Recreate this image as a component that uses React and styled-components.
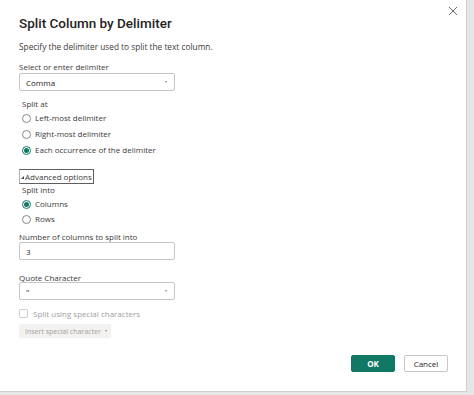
import React from "react";
import styled, { createGlobalStyle } from "styled-components";

const Global = createGlobalStyle`
  html, body { margin: 0; padding: 0; background: #e4e4e4; }
  body { font-family: "Open Sans", "Noto Sans", sans-serif; color: #252423; }
  * { box-sizing: border-box; }
`;

const Page = styled.div`
  width: 474px;
  height: 395px;
  display: flex;
  background: #e6e6e6;
  overflow: hidden;
`;

const Dialog = styled.div`
  width: 467px;
  height: 392px;
  background: #fff;
  border-right: 1px solid #d0d0d0;
  border-bottom: 1px solid #d0d0d0;
  position: relative;
  padding: 13px 0 0 19px;
  display: flex;
  flex-direction: column;
`;

const Close = styled.button`
  position: absolute;
  top: 4px;
  right: 6px;
  width: 14px;
  height: 14px;
  border: 0;
  background: transparent;
  padding: 0;
  display: flex;
  align-items: center;
  justify-content: center;
`;

const Title = styled.h1`
  margin: 0;
  font-family: Roboto, "Open Sans", sans-serif;
  font-size: 13.5px;
  font-weight: 500;
  line-height: 20px;
  color: #252423;
`;

const Desc = styled.p`
  margin: 8px 0 0;
  font-size: 8.3px;
  line-height: 12px;
  color: #3b3a39;
`;

const Label = styled.div`
  font-size: 8px;
  line-height: 12px;
  color: #3b3a39;
  margin-top: ${(p) => p.mt || 0}px;
  padding-left: ${(p) => p.indent || 0}px;
`;

const Field = styled.div`
  width: 156px;
  height: 18px;
  border: 1px solid #c8c6c4;
  border-radius: 2px;
  margin-top: ${(p) => p.mt || 0}px;
  display: flex;
  align-items: center;
  justify-content: space-between;
  padding: 0 7px 0 6px;
  font-size: 8px;
  color: #252423;
`;

const Caret = styled.span`
  width: 0;
  height: 0;
  border-left: 1.5px solid transparent;
  border-right: 1.5px solid transparent;
  border-top: 2px solid #888;
`;

const Group = styled.div`
  display: flex;
  flex-direction: column;
  gap: ${(p) => p.gap || 4}px;
  padding-left: 3px;
  margin-top: ${(p) => p.mt || 0}px;
`;

const RadioRow = styled.label`
  display: flex;
  align-items: center;
  gap: 4px;
  font-size: 8px;
  line-height: 12px;
  color: #3b3a39;
`;

const Radio = styled.span`
  width: 9px;
  height: 9px;
  border-radius: 50%;
  border: 1px solid ${(p) => (p.on ? "#117865" : "#8a8886")};
  display: flex;
  align-items: center;
  justify-content: center;
  &::after {
    content: "";
    width: 5px;
    height: 5px;
    border-radius: 50%;
    background: ${(p) => (p.on ? "#117865" : "transparent")};
  }
`;

const AdvToggle = styled.div`
  align-self: flex-start;
  margin-top: 13px;
  border: 1px solid #605e5c;
  border-left-color: #b0b0b0;
  padding: 0 1px;
  height: 15px;
  display: flex;
  align-items: center;
  gap: 1px;
  font-size: 8px;
  color: #3b3a39;
`;

const Tri = styled.span`
  width: 0;
  height: 0;
  border-left: 3px solid transparent;
  border-bottom: 3px solid #444;
  margin-top: 2px;
`;

const CheckRow = styled.div`
  display: flex;
  align-items: center;
  gap: 5px;
  margin-top: 8px;
  font-size: 8px;
  color: #a19f9d;
`;

const Box = styled.span`
  width: 9px;
  height: 9px;
  border: 1px solid #d2d0ce;
  border-radius: 1px;
`;

const DisabledBtn = styled.div`
  align-self: flex-start;
  margin-top: 5px;
  height: 14px;
  width: 92px;
  background: #f3f2f1;
  color: #a19f9d;
  font-size: 7px;
  display: flex;
  align-items: center;
  gap: 4px;
  padding-left: 6px;
`;

const Footer = styled.div`
  display: flex;
  justify-content: flex-end;
  gap: 9px;
  padding-right: 18px;
  margin-top: 17px;
`;

const Button = styled.button`
  width: 44px;
  height: 17px;
  border-radius: 2px;
  font-family: inherit;
  font-size: 8px;
  font-weight: ${(p) => (p.primary ? 700 : 400)};
  padding: 0;
  background: ${(p) => (p.primary ? "#117865" : "#fff")};
  color: ${(p) => (p.primary ? "#fff" : "#252423")};
  border: 1px solid ${(p) => (p.primary ? "#117865" : "#c8c6c4")};
`;

export default function App() {
  return (
    <>
      <Global />
      <Page>
        <Dialog>
          <Close aria-label="Close">
            <svg width="10" height="10" viewBox="0 0 10 10">
              <path d="M1 1L9 9M9 1L1 9" stroke="#666" strokeWidth="1" />
            </svg>
          </Close>
          <Title>Split Column by Delimiter</Title>
          <Desc>Specify the delimiter used to split the text column.</Desc>
          <Label mt={8}>Select or enter delimiter</Label>
          <Field mt={0}>
            <span>Comma</span>
            <Caret />
          </Field>
          <Label mt={7} indent={3}>Split at</Label>
          <Group mt={2} gap={4}>
            <RadioRow><Radio />Left-most delimiter</RadioRow>
            <RadioRow><Radio />Right-most delimiter</RadioRow>
            <RadioRow><Radio on />Each occurrence of the delimiter</RadioRow>
          </Group>
          <AdvToggle><Tri />Advanced options</AdvToggle>
          <Label mt={0} indent={3}>Split into</Label>
          <Group mt={2} gap={3}>
            <RadioRow><Radio on />Columns</RadioRow>
            <RadioRow><Radio />Rows</RadioRow>
          </Group>
          <Label mt={6}>Number of columns to split into</Label>
          <Field mt={-1}><span>3</span></Field>
          <Label mt={12}>Quote Character</Label>
          <Field mt={-2}>
            <span>"</span>
            <Caret />
          </Field>
          <CheckRow><Box />Split using special characters</CheckRow>
          <DisabledBtn>Insert special character <Caret /></DisabledBtn>
          <Footer>
            <Button primary>OK</Button>
            <Button>Cancel</Button>
          </Footer>
        </Dialog>
      </Page>
    </>
  );
}
